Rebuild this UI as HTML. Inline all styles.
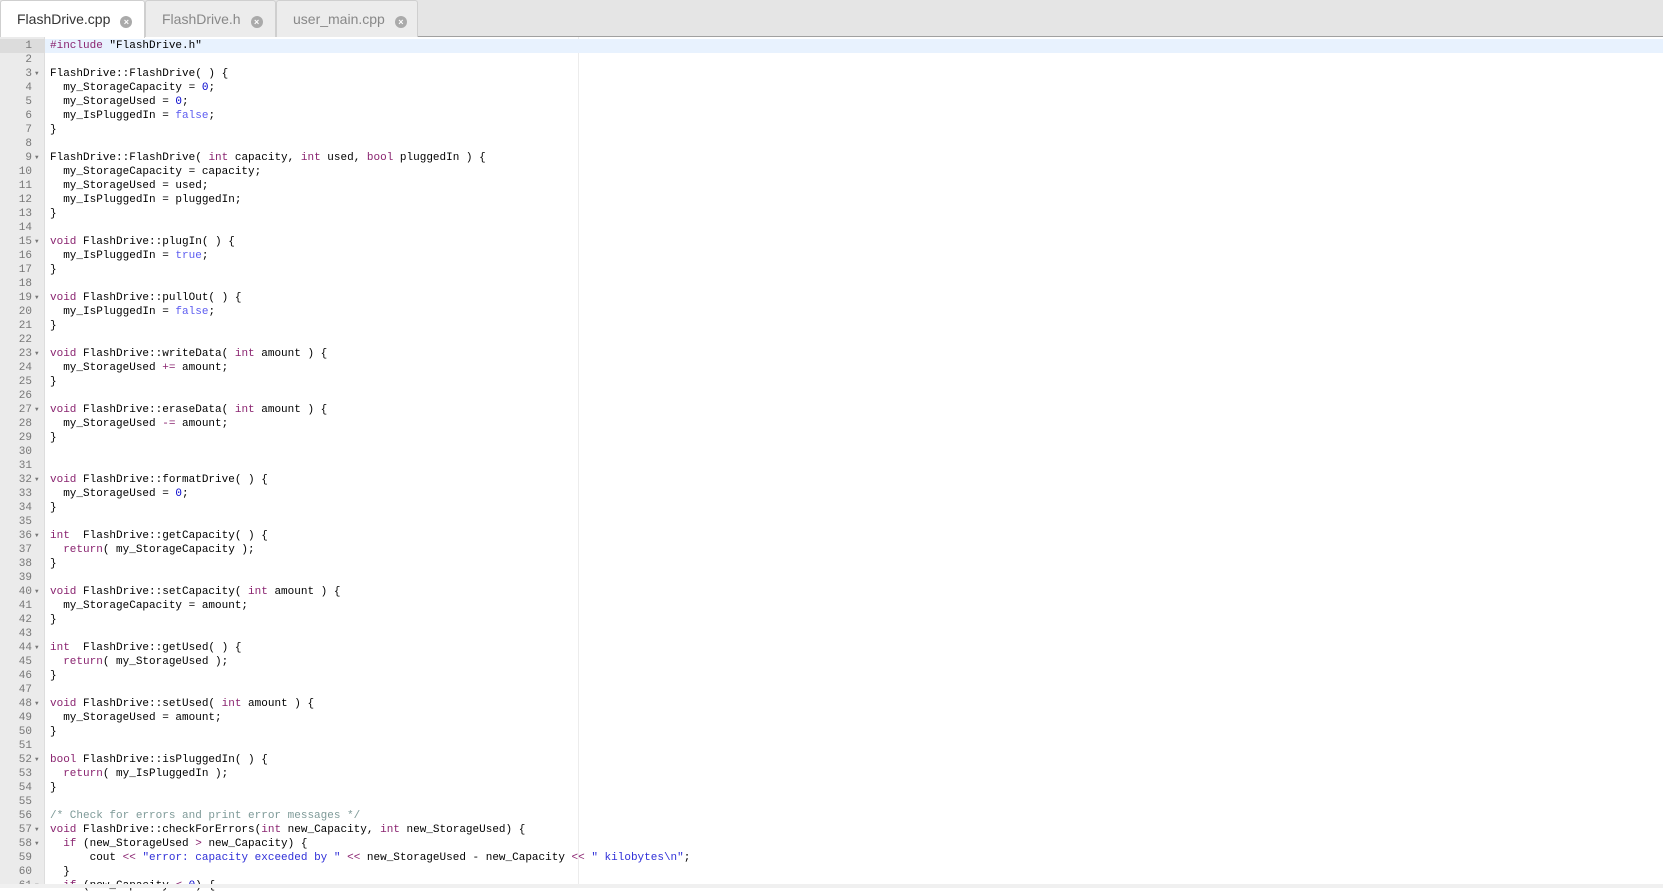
<!DOCTYPE html>
<html><head><meta charset="utf-8"><style>
*{margin:0;padding:0;box-sizing:border-box}
body{width:1663px;height:888px;overflow:hidden;background:#fff;font-family:"Liberation Sans",sans-serif;position:relative}
.bar{position:absolute;left:0;top:0;width:1663px;height:37px;background:#e5e5e5;border-bottom:1px solid #a0a0a0}
.tab{position:absolute;top:0;height:37px;border:1px solid #cfcfcf;border-bottom:none;border-radius:3px 3px 0 0;font-size:14px;color:#888;line-height:37px;padding-left:16px;background:#ececec}
.tab.a{background:#fff;color:#333;height:38px}
.x{display:inline-block;width:12px;height:12px;border-radius:6px;background:#aaa;color:#fff;font-size:9px;line-height:12px;text-align:center;vertical-align:-1px;margin-left:10px;font-weight:bold}
.gut{position:absolute;left:0;top:37px;width:45px;height:848px;background:#ebebeb;border-right:1px solid #ddd}
.code{position:absolute;left:0;top:39px;width:1663px;font-family:"Liberation Mono",monospace;font-size:11px;line-height:14px}
.l{height:14px;position:relative;white-space:pre}
.n{position:absolute;left:0;width:32px;text-align:right;color:#777}
.f{position:absolute;left:35px;top:0;font-size:6px;color:#777}
.t{position:absolute;left:50px;color:#000}
.cur{background:#e8f2fe}
.cur .n{background:#dcdcdc;width:45px;padding-right:13px}
.pm{position:absolute;left:578px;top:37px;width:1px;height:848px;background:#ececec}
.k{color:#8a2470}.num{color:#0000cd}.c{color:#5c5cf0}.s{color:#2f2fd8}.cm{color:#7e9a98}.o{color:#8a2470}
.sb{position:absolute;left:0;top:884px;width:1663px;height:4px;background:#f0f0f0}
</style></head><body>
<div class="bar"></div>
<div class="tab a" style="left:0;width:145px">FlashDrive.cpp<span class="x">×</span></div>
<div class="tab" style="left:145px;width:131px">FlashDrive.h<span class="x">×</span></div>
<div class="tab" style="left:276px;width:142px">user_main.cpp<span class="x">×</span></div>
<div class="gut"></div>
<div class="pm"></div>
<div class="code">
<div class="l cur"><span class="n">1</span><span class="t"><span class="k">#include</span> "FlashDrive.h"</span></div>
<div class="l"><span class="n">2</span></div>
<div class="l"><span class="n">3</span><span class="f">▼</span><span class="t">FlashDrive::FlashDrive( ) {</span></div>
<div class="l"><span class="n">4</span><span class="t">  my_StorageCapacity = <span class="num">0</span>;</span></div>
<div class="l"><span class="n">5</span><span class="t">  my_StorageUsed = <span class="num">0</span>;</span></div>
<div class="l"><span class="n">6</span><span class="t">  my_IsPluggedIn = <span class="c">false</span>;</span></div>
<div class="l"><span class="n">7</span><span class="t">}</span></div>
<div class="l"><span class="n">8</span></div>
<div class="l"><span class="n">9</span><span class="f">▼</span><span class="t">FlashDrive::FlashDrive( <span class="k">int</span> capacity, <span class="k">int</span> used, <span class="k">bool</span> pluggedIn ) {</span></div>
<div class="l"><span class="n">10</span><span class="t">  my_StorageCapacity = capacity;</span></div>
<div class="l"><span class="n">11</span><span class="t">  my_StorageUsed = used;</span></div>
<div class="l"><span class="n">12</span><span class="t">  my_IsPluggedIn = pluggedIn;</span></div>
<div class="l"><span class="n">13</span><span class="t">}</span></div>
<div class="l"><span class="n">14</span></div>
<div class="l"><span class="n">15</span><span class="f">▼</span><span class="t"><span class="k">void</span> FlashDrive::plugIn( ) {</span></div>
<div class="l"><span class="n">16</span><span class="t">  my_IsPluggedIn = <span class="c">true</span>;</span></div>
<div class="l"><span class="n">17</span><span class="t">}</span></div>
<div class="l"><span class="n">18</span></div>
<div class="l"><span class="n">19</span><span class="f">▼</span><span class="t"><span class="k">void</span> FlashDrive::pullOut( ) {</span></div>
<div class="l"><span class="n">20</span><span class="t">  my_IsPluggedIn = <span class="c">false</span>;</span></div>
<div class="l"><span class="n">21</span><span class="t">}</span></div>
<div class="l"><span class="n">22</span></div>
<div class="l"><span class="n">23</span><span class="f">▼</span><span class="t"><span class="k">void</span> FlashDrive::writeData( <span class="k">int</span> amount ) {</span></div>
<div class="l"><span class="n">24</span><span class="t">  my_StorageUsed <span class="o">+=</span> amount;</span></div>
<div class="l"><span class="n">25</span><span class="t">}</span></div>
<div class="l"><span class="n">26</span></div>
<div class="l"><span class="n">27</span><span class="f">▼</span><span class="t"><span class="k">void</span> FlashDrive::eraseData( <span class="k">int</span> amount ) {</span></div>
<div class="l"><span class="n">28</span><span class="t">  my_StorageUsed <span class="o">-=</span> amount;</span></div>
<div class="l"><span class="n">29</span><span class="t">}</span></div>
<div class="l"><span class="n">30</span></div>
<div class="l"><span class="n">31</span></div>
<div class="l"><span class="n">32</span><span class="f">▼</span><span class="t"><span class="k">void</span> FlashDrive::formatDrive( ) {</span></div>
<div class="l"><span class="n">33</span><span class="t">  my_StorageUsed = <span class="num">0</span>;</span></div>
<div class="l"><span class="n">34</span><span class="t">}</span></div>
<div class="l"><span class="n">35</span></div>
<div class="l"><span class="n">36</span><span class="f">▼</span><span class="t"><span class="k">int</span>  FlashDrive::getCapacity( ) {</span></div>
<div class="l"><span class="n">37</span><span class="t">  <span class="k">return</span>( my_StorageCapacity );</span></div>
<div class="l"><span class="n">38</span><span class="t">}</span></div>
<div class="l"><span class="n">39</span></div>
<div class="l"><span class="n">40</span><span class="f">▼</span><span class="t"><span class="k">void</span> FlashDrive::setCapacity( <span class="k">int</span> amount ) {</span></div>
<div class="l"><span class="n">41</span><span class="t">  my_StorageCapacity = amount;</span></div>
<div class="l"><span class="n">42</span><span class="t">}</span></div>
<div class="l"><span class="n">43</span></div>
<div class="l"><span class="n">44</span><span class="f">▼</span><span class="t"><span class="k">int</span>  FlashDrive::getUsed( ) {</span></div>
<div class="l"><span class="n">45</span><span class="t">  <span class="k">return</span>( my_StorageUsed );</span></div>
<div class="l"><span class="n">46</span><span class="t">}</span></div>
<div class="l"><span class="n">47</span></div>
<div class="l"><span class="n">48</span><span class="f">▼</span><span class="t"><span class="k">void</span> FlashDrive::setUsed( <span class="k">int</span> amount ) {</span></div>
<div class="l"><span class="n">49</span><span class="t">  my_StorageUsed = amount;</span></div>
<div class="l"><span class="n">50</span><span class="t">}</span></div>
<div class="l"><span class="n">51</span></div>
<div class="l"><span class="n">52</span><span class="f">▼</span><span class="t"><span class="k">bool</span> FlashDrive::isPluggedIn( ) {</span></div>
<div class="l"><span class="n">53</span><span class="t">  <span class="k">return</span>( my_IsPluggedIn );</span></div>
<div class="l"><span class="n">54</span><span class="t">}</span></div>
<div class="l"><span class="n">55</span></div>
<div class="l"><span class="n">56</span><span class="t"><span class="cm">/* Check for errors and print error messages */</span></span></div>
<div class="l"><span class="n">57</span><span class="f">▼</span><span class="t"><span class="k">void</span> FlashDrive::checkForErrors(<span class="k">int</span> new_Capacity, <span class="k">int</span> new_StorageUsed) {</span></div>
<div class="l"><span class="n">58</span><span class="f">▼</span><span class="t">  <span class="k">if</span> (new_StorageUsed <span class="o">&gt;</span> new_Capacity) {</span></div>
<div class="l"><span class="n">59</span><span class="t">      cout <span class="o">&lt;&lt;</span> <span class="s">"error: capacity exceeded by "</span> <span class="o">&lt;&lt;</span> new_StorageUsed - new_Capacity <span class="o">&lt;&lt;</span> <span class="s">" kilobytes\n"</span>;</span></div>
<div class="l"><span class="n">60</span><span class="t">  }</span></div>
<div class="l"><span class="n">61</span><span class="f">▼</span><span class="t">  <span class="k">if</span> (new_Capacity <span class="o">&lt;</span> <span class="num">0</span>) {</span></div>
</div>
<div class="sb"></div>
</body></html>
